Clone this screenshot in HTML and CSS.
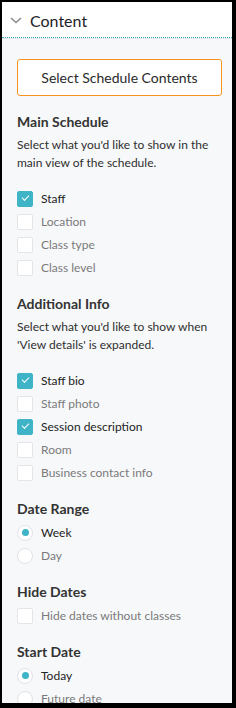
FILE: index.html
```html
<!DOCTYPE html>
<html>
<head>
    <meta charset="utf-8">
    <title>Content</title>
    <link rel="stylesheet" href="styles.css">
</head>
<body>
    <div class="frame">
        <div class="panel-header">
            <svg class="chevron" width="12" height="7" viewBox="0 0 12 7">
                <polyline points="1,1 6,5.5 11,1" fill="none" stroke="#8a8a8a" stroke-width="1.5"/>
            </svg>
            <span class="panel-title">Content</span>
        </div>

        <div class="panel-body">
            <button class="btn-outline">Select Schedule Contents</button>

            <div class="section">
                <h3>Main Schedule</h3>
                <p class="desc">Select what you'd like to show in the main view of the schedule.</p>
                <div class="options">
                    <div class="opt checked"><span class="box"></span>Staff</div>
                    <div class="opt"><span class="box"></span>Location</div>
                    <div class="opt"><span class="box"></span>Class type</div>
                    <div class="opt"><span class="box"></span>Class level</div>
                </div>
            </div>

            <div class="section">
                <h3>Additional Info</h3>
                <p class="desc">Select what you'd like to show when 'View details' is expanded.</p>
                <div class="options">
                    <div class="opt checked"><span class="box"></span>Staff bio</div>
                    <div class="opt"><span class="box"></span>Staff photo</div>
                    <div class="opt checked"><span class="box"></span>Session description</div>
                    <div class="opt"><span class="box"></span>Room</div>
                    <div class="opt"><span class="box"></span>Business contact info</div>
                </div>
            </div>

            <div class="section">
                <h3>Date Range</h3>
                <div class="options tight">
                    <div class="opt checked"><span class="radio"></span>Week</div>
                    <div class="opt"><span class="radio"></span>Day</div>
                </div>
            </div>

            <div class="section">
                <h3>Hide Dates</h3>
                <div class="options tight">
                    <div class="opt"><span class="box"></span>Hide dates without classes</div>
                </div>
            </div>

            <div class="section">
                <h3>Start Date</h3>
                <div class="options tight">
                    <div class="opt checked"><span class="radio"></span>Today</div>
                    <div class="opt"><span class="radio"></span>Future date</div>
                </div>
            </div>
        </div>
    </div>
</body>
</html>
```

FILE: styles.css
```css
html, body {
    margin: 0;
    padding: 0;
    background: #000;
}

.frame {
    box-sizing: border-box;
    width: 236px;
    height: 708px;
    border-style: solid;
    border-color: #000;
    border-width: 2px 4px 5px 2px;
    background: #f7f8fa;
    overflow: hidden;
    font-family: Lato, "Open Sans", sans-serif;
    color: #333;
}

.panel-header {
    height: 35px;
    background: #fff;
    display: flex;
    align-items: center;
    padding-left: 8px;
    border-bottom: 1px dotted #3aa9b8;
    box-shadow: 0 1px 0 #e2e4e6;
}

.chevron {
    margin-right: 8px;
    margin-top: 1px;
}

.panel-title {
    font-size: 16px;
    color: #1c1c28;
    padding-top: 1px;
}

.panel-body {
    padding: 21px 10px 0 15px;
}

.btn-outline {
    display: block;
    width: 100%;
    height: 37px;
    background: #fff;
    border: 1px solid #f7931e;
    border-radius: 3px;
    font-family: inherit;
    font-size: 14px;
    color: #2a2a2a;
    padding: 0;
}

.section {
    margin-top: 15px;
}

.section:first-of-type {
    margin-top: 16px;
}

.section h3 {
    margin: 0;
    font-size: 14px;
    line-height: 20px;
    font-weight: 700;
    color: #333;
}

.desc {
    margin: 4px 0 15px;
    font-size: 12px;
    line-height: 18px;
    color: #2f2f2f;
}

.options.tight {
    margin-top: 2px;
}

.opt {
    height: 23px;
    display: flex;
    align-items: center;
    gap: 8px;
    font-size: 12px;
    color: #7a7a7a;
}

.opt.checked {
    color: #222;
}

.box {
    box-sizing: border-box;
    width: 16px;
    height: 16px;
    border: 1px solid #e3e5e8;
    border-radius: 2px;
    background: #fff;
    position: relative;
}

.opt.checked .box {
    background: #3eb4c6;
    border-color: #3eb4c6;
}

.opt.checked .box::after {
    content: "";
    position: absolute;
    left: 4px;
    top: 3px;
    width: 6px;
    height: 3px;
    border-left: 1.5px solid #fff;
    border-bottom: 1.5px solid #fff;
    transform: rotate(-45deg);
}

.radio {
    box-sizing: border-box;
    width: 16px;
    height: 16px;
    border: 1px solid #e0e2e5;
    border-radius: 50%;
    background: #fff;
    display: flex;
    align-items: center;
    justify-content: center;
}

.opt.checked .radio::after {
    content: "";
    width: 7px;
    height: 7px;
    border-radius: 50%;
    background: #3eb4c6;
}
```
